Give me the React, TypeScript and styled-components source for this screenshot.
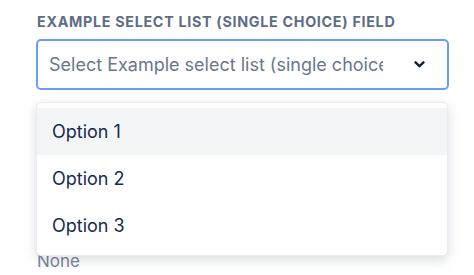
import React from "react";
import styled, { createGlobalStyle } from "styled-components";

const GlobalStyle = createGlobalStyle`
  html, body {
    margin: 0;
    padding: 0;
    background: #ffffff;
    font-family: Inter, "Liberation Sans", Arial, sans-serif;
  }
`;

const options = ["Option 1", "Option 2", "Option 3"];

export default function App() {
  return (
    <>
      <GlobalStyle />
      <Page>
        <Label>Example select list (single choice) field</Label>
        <SelectWrap>
          <SelectBox>
            <Placeholder>Select Example select list (single choice) field</Placeholder>
            <Chevron viewBox="0 0 12 8" aria-hidden="true">
              <path d="M1.5 1.5 L6 6 L10.5 1.5" />
            </Chevron>
          </SelectBox>
          <Menu>
            {options.map((o, i) => (
              <MenuItem key={o} $active={i === 0}>
                {o}
              </MenuItem>
            ))}
          </Menu>
        </SelectWrap>
        <Value>None</Value>
      </Page>
    </>
  );
}

const Page = styled.div`
  padding: 14px 25px 0 36px;
  width: 413px;
`;

const Label = styled.div`
  font-size: 14.3px;
  font-weight: 700;
  line-height: 16px;
  letter-spacing: 0.7px;
  text-transform: uppercase;
  color: #5e6c84;
  padding-left: 1px;
  margin-bottom: 9px;
  white-space: nowrap;
`;

const SelectWrap = styled.div`
  position: relative;
`;

const SelectBox = styled.div`
  box-sizing: border-box;
  height: 51px;
  border: 2px solid #6c9ef0;
  border-radius: 5px;
  display: flex;
  align-items: center;
  padding: 0 22px 0 11px;
  gap: 31px;
`;

const Placeholder = styled.div`
  flex: 1;
  min-width: 0;
  overflow: hidden;
  white-space: nowrap;
  font-size: 18px;
  color: #6b778c;
`;

const Chevron = styled.svg`
  width: 11px;
  height: 7px;
  fill: none;
  stroke: #0f1e3d;
  stroke-width: 2.8;
  stroke-linecap: round;
  stroke-linejoin: round;
`;

const Menu = styled.div`
  position: absolute;
  top: 63px;
  left: 0;
  width: 412px;
  box-sizing: border-box;
  padding: 5px 0 6px;
  background: #ffffff;
  border: 1px solid #ebecf0;
  border-radius: 5px;
  box-shadow: 0 4px 12px rgba(9, 30, 66, 0.15);
`;

const MenuItem = styled.div<{ $active?: boolean }>`
  height: 47px;
  display: flex;
  align-items: center;
  padding-left: 15px;
  font-size: 18px;
  color: #172b4d;
  background: ${(p) => (p.$active ? "#f4f5f7" : "transparent")};
`;

const Value = styled.div`
  margin-top: 161px;
  padding-left: 1px;
  font-size: 17px;
  line-height: 20px;
  color: #7a869a;
`;
